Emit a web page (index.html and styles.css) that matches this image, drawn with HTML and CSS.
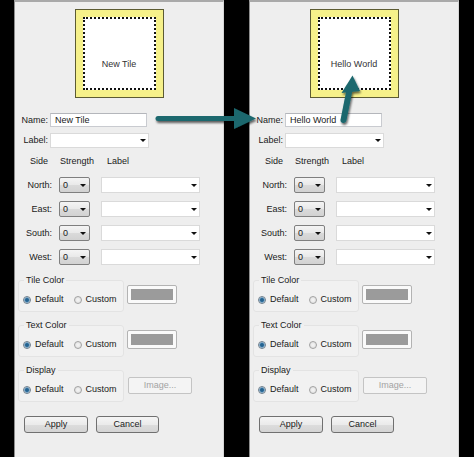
FILE: index.html
```html
<!DOCTYPE html>
<html>
<head>
<meta charset="utf-8">
<title>Tile Editor</title>
<link rel="stylesheet" href="styles.css">
</head>
<body>
<div class="stage">
  <section class="panel">
    <div class="tile"><div class="tile-inner"><span class="tile-text">New Tile</span></div></div>
    <div class="field-row name-row"><span class="field-label">Name:</span><div class="textbox">New Tile</div></div>
    <div class="field-row label-row"><span class="field-label">Label:</span><div class="combo wide"><span class="caret"></span></div></div>
    <div class="side-head"><span class="h-side">Side</span><span class="h-strength">Strength</span><span class="h-label">Label</span></div>
    <div class="sides">
      <div class="side-row"><span class="side-label">North:</span><div class="spin"><span>0</span><span class="caret"></span></div><div class="combo side-combo"><span class="caret"></span></div></div>
      <div class="side-row"><span class="side-label">East:</span><div class="spin"><span>0</span><span class="caret"></span></div><div class="combo side-combo"><span class="caret"></span></div></div>
      <div class="side-row"><span class="side-label">South:</span><div class="spin"><span>0</span><span class="caret"></span></div><div class="combo side-combo"><span class="caret"></span></div></div>
      <div class="side-row"><span class="side-label">West:</span><div class="spin"><span>0</span><span class="caret"></span></div><div class="combo side-combo"><span class="caret"></span></div></div>
    </div>
    <div class="groups">
      <div class="group-row">
        <fieldset class="group"><legend>Tile Color</legend>
          <div class="radios"><span class="opt first"><span class="radio on"></span>Default</span><span class="opt"><span class="radio"></span>Custom</span></div>
        </fieldset>
        <div class="swatch"><span class="swatch-fill"></span></div>
      </div>
      <div class="group-row">
        <fieldset class="group"><legend>Text Color</legend>
          <div class="radios"><span class="opt first"><span class="radio on"></span>Default</span><span class="opt"><span class="radio"></span>Custom</span></div>
        </fieldset>
        <div class="swatch"><span class="swatch-fill"></span></div>
      </div>
      <div class="group-row">
        <fieldset class="group"><legend>Display</legend>
          <div class="radios"><span class="opt first"><span class="radio on"></span>Default</span><span class="opt"><span class="radio"></span>Custom</span></div>
        </fieldset>
        <div class="img-btn">Image...</div>
      </div>
    </div>
    <div class="actions"><div class="btn apply">Apply</div><div class="btn cancel">Cancel</div></div>
  </section>

  <section class="panel">
    <div class="tile"><div class="tile-inner"><span class="tile-text">Hello World</span></div></div>
    <div class="field-row name-row"><span class="field-label">Name:</span><div class="textbox">Hello World</div></div>
    <div class="field-row label-row"><span class="field-label">Label:</span><div class="combo wide"><span class="caret"></span></div></div>
    <div class="side-head"><span class="h-side">Side</span><span class="h-strength">Strength</span><span class="h-label">Label</span></div>
    <div class="sides">
      <div class="side-row"><span class="side-label">North:</span><div class="spin"><span>0</span><span class="caret"></span></div><div class="combo side-combo"><span class="caret"></span></div></div>
      <div class="side-row"><span class="side-label">East:</span><div class="spin"><span>0</span><span class="caret"></span></div><div class="combo side-combo"><span class="caret"></span></div></div>
      <div class="side-row"><span class="side-label">South:</span><div class="spin"><span>0</span><span class="caret"></span></div><div class="combo side-combo"><span class="caret"></span></div></div>
      <div class="side-row"><span class="side-label">West:</span><div class="spin"><span>0</span><span class="caret"></span></div><div class="combo side-combo"><span class="caret"></span></div></div>
    </div>
    <div class="groups">
      <div class="group-row">
        <fieldset class="group"><legend>Tile Color</legend>
          <div class="radios"><span class="opt first"><span class="radio on"></span>Default</span><span class="opt"><span class="radio"></span>Custom</span></div>
        </fieldset>
        <div class="swatch"><span class="swatch-fill"></span></div>
      </div>
      <div class="group-row">
        <fieldset class="group"><legend>Text Color</legend>
          <div class="radios"><span class="opt first"><span class="radio on"></span>Default</span><span class="opt"><span class="radio"></span>Custom</span></div>
        </fieldset>
        <div class="swatch"><span class="swatch-fill"></span></div>
      </div>
      <div class="group-row">
        <fieldset class="group"><legend>Display</legend>
          <div class="radios"><span class="opt first"><span class="radio on"></span>Default</span><span class="opt"><span class="radio"></span>Custom</span></div>
        </fieldset>
        <div class="img-btn">Image...</div>
      </div>
    </div>
    <div class="actions"><div class="btn apply">Apply</div><div class="btn cancel">Cancel</div></div>
  </section>

  <svg class="arrows" width="474" height="457" viewBox="0 0 474 457" aria-hidden="true">
    <defs>
      <filter id="arrow-shadow" x="-30%" y="-30%" width="160%" height="160%">
        <feDropShadow dx="1" dy="2" stdDeviation="1.3" flood-color="#000" flood-opacity="0.6"/>
      </filter>
    </defs>
    <g fill="#1c686e" stroke="none" filter="url(#arrow-shadow)">
      <line x1="158" y1="118.5" x2="237" y2="118.5" stroke="#1c686e" stroke-width="5" stroke-linecap="round"/>
      <polygon points="234,108 256,118.5 234,129"/>
      <line x1="343.5" y1="120" x2="349.5" y2="90" stroke="#1c686e" stroke-width="6" stroke-linecap="round"/>
      <polygon points="341.5,93 352.5,75.5 360,91"/>
    </g>
  </svg>
</div>
</body>
</html>
```

FILE: styles.css
```css
* { box-sizing: border-box; }

html, body {
  margin: 0;
  padding: 0;
  background: #000;
}

body {
  font-family: "Liberation Sans", Arial, sans-serif;
  font-size: 9px;
  line-height: 11px;
  color: #1a1a1a;
}

.stage {
  position: relative;
  width: 474px;
  height: 457px;
  display: flex;
  gap: 25px;
  padding-left: 14px;
  overflow: hidden;
}

.panel {
  width: 210px;
  height: 457px;
  flex: none;
  background: #eeeeee;
  border-top: 2px solid #a9a9a9;
  border-left: 1px solid #8e8e8e;
  border-right: 1px solid #d6d6d6;
  display: flex;
  flex-direction: column;
}

/* tile preview */
.tile {
  margin: 7px auto 0;
  width: 89px;
  height: 89px;
  border: 1px solid #5c5b33;
  background: #f6f18a;
  padding: 7px;
}

.tile-inner {
  width: 100%;
  height: 100%;
  border: 2px dotted #111;
  background: #fff;
  text-align: center;
  padding-top: 40px;
  color: #333;
  white-space: nowrap;
}

/* name / label rows */
.field-row {
  display: flex;
  align-items: center;
}

.name-row { margin-top: 15px; height: 14px; }
.label-row { margin-top: 6px; height: 15px; }

.field-label {
  width: 33px;
  margin-right: 2px;
  text-align: right;
}

.textbox {
  width: 97px;
  height: 14px;
  border: 1px solid #c9cbd0;
  border-top-color: #b4b6bb;
  background: #fff;
  padding-left: 4px;
  line-height: 12px;
  white-space: nowrap;
}

.combo {
  display: flex;
  align-items: center;
  justify-content: flex-end;
  background: #fff;
  border: 1px solid #dadada;
  padding-right: 2px;
}

.combo.wide { width: 99px; height: 15px; }

.caret {
  width: 0;
  height: 0;
  border-left: 3px solid transparent;
  border-right: 3px solid transparent;
  border-top: 3px solid #111;
}

/* side table */
.side-head {
  display: flex;
  margin-top: 8px;
  padding-left: 15px;
}

.h-side { width: 30px; }
.h-strength { width: 47px; }

.sides {
  display: flex;
  flex-direction: column;
  gap: 8px;
  margin-top: 10px;
}

.side-row {
  display: flex;
  align-items: center;
  height: 16px;
}

.side-label {
  width: 37px;
  text-align: right;
}

.spin {
  margin-left: 7px;
  width: 31px;
  height: 16px;
  display: flex;
  align-items: center;
  justify-content: space-between;
  border: 1px solid #7f7f7f;
  border-radius: 2px;
  background: linear-gradient(#f4f4f4, #e9e9e9 50%, #dadada 51%, #d2d2d2);
  padding: 0 3px 0 3px;
}

.side-combo {
  margin-left: 11px;
  width: 99px;
  height: 16px;
}

/* group boxes */
.groups {
  display: flex;
  flex-direction: column;
  gap: 8px;
  margin-top: 10px;
}

.group-row {
  display: flex;
  align-items: flex-start;
}

.group {
  margin: 0 0 0 3px;
  width: 106px;
  min-width: 0;
  border: 1px solid #e3e3e3;
  border-radius: 3px;
  background: #f1f1f1;
  padding: 8px 4px 6px 4px;
}

.group legend {
  padding: 0 2px;
  margin-left: 1px;
  font-size: 9px;
  line-height: 11px;
}

.radios {
  display: flex;
  align-items: center;
  height: 11px;
}

.opt {
  display: flex;
  align-items: center;
  white-space: nowrap;
}

.opt.first { margin-right: 10px; }

.radio {
  width: 8px;
  height: 8px;
  border-radius: 50%;
  border: 1px solid #a2a2a2;
  background: radial-gradient(circle, #f6f6f6 0, #dcdcdc 100%);
  margin-right: 4px;
  flex: none;
}

.radio.on {
  border-color: #6f7f8c;
  background: radial-gradient(circle, #1f5a86 0, #2f6d99 1.6px, #8db6d6 2.6px, #e6e6e6 3.2px);
}

.swatch {
  margin: 10px 0 0 3px;
  width: 50px;
  height: 19px;
  border: 1px solid #b3b3b3;
  border-radius: 2px;
  background: #fafafa;
  padding: 3px;
}

.swatch-fill {
  display: block;
  width: 100%;
  height: 100%;
  background: #9b9b9b;
}

.img-btn {
  margin: 12px 0 0 4px;
  width: 64px;
  height: 17px;
  border: 1px solid #c4c4c4;
  border-radius: 2px;
  background: #f4f4f4;
  color: #a3a3a3;
  text-align: center;
  line-height: 15px;
}

/* buttons */
.actions {
  display: flex;
  gap: 8px;
  margin-top: 14px;
  padding-left: 9px;
}

.btn {
  height: 17px;
  border: 1px solid #707070;
  border-radius: 3px;
  background: linear-gradient(#f5f5f5, #ebebeb 50%, #dddddd 51%, #d4d4d4);
  text-align: center;
  line-height: 15px;
}

.btn.apply { width: 64px; }
.btn.cancel { width: 63px; }

/* annotation arrows overlay */
.arrows {
  position: absolute;
  left: 0;
  top: 0;
  pointer-events: none;
}
```
